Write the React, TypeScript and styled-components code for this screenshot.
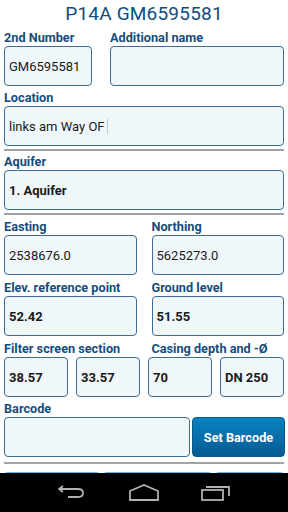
import React from "react";
import styled, { createGlobalStyle } from "styled-components";

const GlobalStyle = createGlobalStyle`
  html, body { margin: 0; padding: 0; background: #fff; }
  body { font-family: Roboto, "Noto Sans", sans-serif; }
`;

const Screen = styled.div`
  width: 288px;
  height: 512px;
  display: flex;
  flex-direction: column;
  overflow: hidden;
`;

const Content = styled.div`
  flex: 1;
  overflow: hidden;
  padding: 0 4px;
`;

const Title = styled.h1`
  margin: 0;
  height: 27px;
  line-height: 28px;
  text-align: center;
  font-size: 19px;
  font-weight: 400;
  color: #0e4c82;
  letter-spacing: 0.2px;
`;

const Row = styled.div<{ $cols: string; $gap: number }>`
  display: grid;
  grid-template-columns: ${(p) => p.$cols};
  column-gap: ${(p) => p.$gap}px;
  margin-bottom: 1px;
`;

const Field = styled.div`
  display: flex;
  flex-direction: column;
  min-width: 0;
`;

const Label = styled.div<{ $top?: number }>`
  height: 19px;
  line-height: 21px;
  font-size: 12.7px;
  font-weight: 700;
  color: #144d7e;
  white-space: nowrap;
  margin-top: ${(p) => p.$top ?? 0}px;
`;

const Box = styled.div<{ $bold?: boolean }>`
  box-sizing: border-box;
  height: 40px;
  border: 1px solid #3f6c90;
  border-radius: 4px;
  background: #f0f7fb;
  display: flex;
  align-items: center;
  padding-left: 4px;
  font-size: 13px;
  font-weight: ${(p) => (p.$bold ? 700 : 400)};
  color: #1a1a1a;
  white-space: nowrap;
  overflow: hidden;
`;

const Caret = styled.span`
  display: inline-block;
  width: 1px;
  height: 15px;
  background: #c8c8c8;
  margin-left: 2px;
`;

const Divider = styled.div<{ $top?: number }>`
  height: 2px;
  background: #a3a3a3;
  margin-top: ${(p) => p.$top ?? 3}px;
`;

const FilterGrid = styled.div`
  display: grid;
  grid-template-columns: repeat(4, 1fr);
  column-gap: 8px;
`;

const LabelPair = styled.div`
  display: grid;
  grid-template-columns: 1fr 1fr;
  column-gap: 15px;
`;

const BarcodeRow = styled.div`
  display: grid;
  grid-template-columns: 186px 1fr;
  column-gap: 2px;
`;

const BlueButton = styled.button`
  box-sizing: border-box;
  height: 40px;
  border: 1px solid #0b5a8c;
  border-radius: 4px;
  background: linear-gradient(#0a82c2, #055b92);
  color: #fff;
  font-family: inherit;
  font-size: 12.7px;
  font-weight: 700;
  padding: 0;
  margin-right: -1px;
`;

const ActionRow = styled.div`
  display: grid;
  grid-template-columns: 96px 109px 1fr;
  column-gap: 3px;
  margin-top: 8px;
`;

const ActionButton = styled.div`
  height: 30px;
  border-radius: 4px 4px 0 0;
  border-top: 1px solid #6ab3dc;
  background: linear-gradient(#0a82c2, #055b92);
`;

const NavBar = styled.div`
  height: 39px;
  flex-shrink: 0;
  background: #000;
  display: flex;
  align-items: center;
  justify-content: space-around;
  padding: 0 36px;
`;

const NavIcon = styled.svg`
  width: 32px;
  height: 18px;
  fill: none;
  stroke: #b0b0b0;
  stroke-width: 1.8;
`;

export default function App() {
  return (
    <Screen>
      <GlobalStyle />
      <Content>
        <Title>P14A GM6595581</Title>
        <Row $cols="88px 1fr" $gap={18}>
          <Field>
            <Label>2nd Number</Label>
            <Box>GM6595581</Box>
          </Field>
          <Field>
            <Label>Additional name</Label>
            <Box />
          </Field>
        </Row>
        <Row $cols="1fr" $gap={0}>
          <Field>
            <Label>Location</Label>
            <Box>
              links am Way OF
              <Caret />
            </Box>
          </Field>
        </Row>
        <Divider />
        <Row $cols="1fr" $gap={0}>
          <Field>
            <Label>Aquifer</Label>
            <Box $bold>1. Aquifer</Box>
          </Field>
        </Row>
        <Divider />
        <Row $cols="1fr 1fr" $gap={15}>
          <Field>
            <Label $top={1}>Easting</Label>
            <Box>2538676.0</Box>
          </Field>
          <Field>
            <Label $top={1}>Northing</Label>
            <Box>5625273.0</Box>
          </Field>
        </Row>
        <Row $cols="1fr 1fr" $gap={15}>
          <Field>
            <Label $top={1}>Elev. reference point</Label>
            <Box $bold>52.42</Box>
          </Field>
          <Field>
            <Label $top={1}>Ground level</Label>
            <Box $bold>51.55</Box>
          </Field>
        </Row>
        <LabelPair>
          <Label $top={1}>Filter screen section</Label>
          <Label $top={1}>Casing depth and -Ø</Label>
        </LabelPair>
        <FilterGrid>
          <Box $bold>38.57</Box>
          <Box $bold>33.57</Box>
          <Box $bold>70</Box>
          <Box $bold>DN 250</Box>
        </FilterGrid>
        <Label $top={1}>Barcode</Label>
        <BarcodeRow>
          <Box />
          <BlueButton>Set Barcode</BlueButton>
        </BarcodeRow>
        <Divider $top={5} />
        <ActionRow>
          <ActionButton />
          <ActionButton />
          <ActionButton />
        </ActionRow>
      </Content>
      <NavBar>
        <NavIcon viewBox="0 0 32 18">
          <path d="M7 2 L3 5 L7 8" strokeLinejoin="round" />
          <path d="M3 5 H22 Q27 5 27 9 Q27 13 22 13 H12" />
        </NavIcon>
        <NavIcon viewBox="0 0 32 18">
          <path d="M2 7 L16 1 L30 7 V16 H2 Z" strokeLinejoin="miter" />
        </NavIcon>
        <NavIcon viewBox="0 0 32 18">
          <rect x="2" y="6" width="21" height="10" />
          <path d="M6 3 H29 V12" />
        </NavIcon>
      </NavBar>
    </Screen>
  );
}
